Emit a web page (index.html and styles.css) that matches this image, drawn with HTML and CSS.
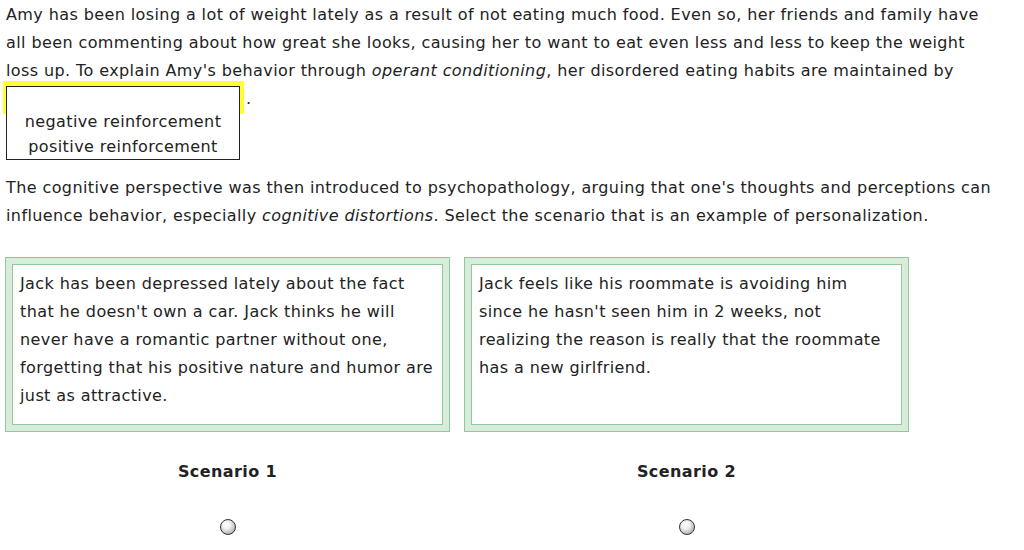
FILE: index.html
```html
<!DOCTYPE html>
<html>
<head>
<meta charset="utf-8">
<link rel="stylesheet" href="styles.css">
</head>
<body>
<p class="para first">Amy has been losing a lot of weight lately as a result of not eating much food. Even so, her friends and family have all been commenting about how great she looks, causing her to want to eat even less and less to keep the weight loss up. To explain Amy's behavior through <em>operant conditioning</em>, her disordered eating habits are maintained by <span class="dd"><span class="select"></span><span class="listbox"><span class="opt">negative reinforcement</span><span class="opt">positive reinforcement</span></span></span>.</p>
<p class="para second">The cognitive perspective was then introduced to psychopathology, arguing that one's thoughts and perceptions can influence behavior, especially <em>cognitive distortions</em>. Select the scenario that is an example of personalization.</p>
<div class="scenarios">
  <div class="card"><div class="card-inner">Jack has been depressed lately about the fact that he doesn't own a car. Jack thinks he will never have a romantic partner without one, forgetting that his positive nature and humor are just as attractive.</div></div>
  <div class="card"><div class="card-inner">Jack feels like his roommate is avoiding him since he hasn't seen him in 2 weeks, not realizing the reason is really that the roommate has a new girlfriend.</div></div>
  <div class="label">Scenario 1</div>
  <div class="label">Scenario 2</div>
  <div class="radio-cell"><span class="radio"></span></div>
  <div class="radio-cell"><span class="radio"></span></div>
</div>
</body>
</html>
```
FILE: styles.css
```css
html, body {
  margin: 0;
  padding: 0;
  background: #fff;
}
body {
  font-family: "DejaVu Sans", Verdana, sans-serif;
  font-size: 16px;
  letter-spacing: 0.4px;
  color: #222;
  padding-top: 1px;
}
.para {
  margin: 0;
  padding: 0 28px 0 6px;
  line-height: 28px;
}
.second {
  margin-top: 61px;
}
.dd {
  position: relative;
  display: inline-block;
  vertical-align: baseline;
  background: #ffff33;
  padding: 5px 4px 4px 3px;
  margin: -4px 2px -10px -3px;
  line-height: 0;
}
.select {
  display: block;
  width: 232px;
  height: 22px;
  border: 1px solid #222;
  background: #fff;
}
.listbox {
  position: absolute;
  left: 3px;
  top: 28px;
  width: 232px;
  border: 1px solid #222;
  border-top: none;
  background: #fff;
  display: flex;
  flex-direction: column;
  line-height: 25px;
  text-align: center;
}
.opt {
  display: block;
  height: 25px;
}
.scenarios {
  display: grid;
  grid-template-columns: 445px 445px;
  column-gap: 14px;
  margin: 27px 0 0 5px;
}
.card {
  border: 1px solid #8ec99a;
  background: #d9ecdc;
  padding: 6px;
  display: flex;
}
.card-inner {
  flex: 1;
  background: #fff;
  border: 1px solid #8ec99a;
  padding: 5px 7px 14px;
  line-height: 28px;
}
.label {
  text-align: center;
  font-weight: bold;
  line-height: 28px;
  margin-top: 26px;
}
.radio-cell {
  display: flex;
  justify-content: center;
  margin-top: 33px;
}
.radio {
  display: block;
  width: 16px;
  height: 16px;
  box-sizing: border-box;
  border: 1.5px solid #333;
  border-radius: 50%;
  background: radial-gradient(circle at 40% 35%, #fff 0%, #f2f2f2 30%, #b5b5b5 75%, #8a8a8a 100%);
}
```
